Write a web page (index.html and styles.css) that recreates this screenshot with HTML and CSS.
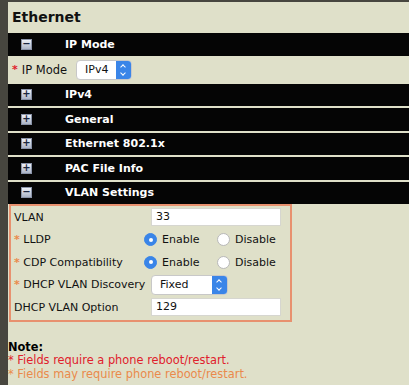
FILE: index.html
```html
<!DOCTYPE html>
<html lang="en">
<head>
  <meta charset="UTF-8">
  <title>Ethernet</title>
  <link rel="stylesheet" href="styles.css">
</head>
<body>
  <div class="page">
    <h1 class="title">Ethernet</h1>

    <div class="bar"><span class="toggle">&minus;</span><span class="bar-label">IP Mode</span></div>
    <div class="ipmode">
      <span class="req">*</span><span class="ip-label">IP Mode</span>
      <span class="select small"><span class="select-text">IPv4</span><span class="arrows"></span></span>
    </div>

    <div class="bar"><span class="toggle">+</span><span class="bar-label">IPv4</span></div>
    <div class="bar gap"><span class="toggle">+</span><span class="bar-label">General</span></div>
    <div class="bar gap"><span class="toggle">+</span><span class="bar-label">Ethernet 802.1x</span></div>
    <div class="bar gap"><span class="toggle">+</span><span class="bar-label">PAC File Info</span></div>
    <div class="bar gap"><span class="toggle">&minus;</span><span class="bar-label">VLAN Settings</span></div>

    <div class="vlan">
      <div class="row">
        <span class="label">VLAN</span>
        <span class="input">33</span>
      </div>
      <div class="row">
        <span class="label"><span class="may">*</span> LLDP</span>
        <span class="radios">
          <span class="radio on"></span><span class="opt">Enable</span>
          <span class="radio"></span><span class="opt">Disable</span>
        </span>
      </div>
      <div class="row">
        <span class="label"><span class="may">*</span> CDP Compatibility</span>
        <span class="radios">
          <span class="radio on"></span><span class="opt">Enable</span>
          <span class="radio"></span><span class="opt">Disable</span>
        </span>
      </div>
      <div class="row">
        <span class="label"><span class="may">*</span> DHCP VLAN Discovery</span>
        <span class="select wide"><span class="select-text">Fixed</span><span class="arrows"></span></span>
      </div>
      <div class="row">
        <span class="label">DHCP VLAN Option</span>
        <span class="input">129</span>
      </div>
    </div>

    <div class="note">
      <div class="note-title">Note:</div>
      <div class="note-red">* Fields require a phone reboot/restart.</div>
      <div class="note-orange">* Fields may require phone reboot/restart.</div>
    </div>
  </div>
</body>
</html>
```

FILE: styles.css
```css
body {
  margin: 0;
  padding: 0;
  background-color: #dfe0c9;
  font-family: "DejaVu Sans", Verdana, sans-serif;
  font-size: 11px;
  color: #111;
}

.page {
  border-left: 8px solid #47463f;
  border-top: 2px solid #47463f;
  min-height: 383px;
}

.title {
  margin: 0;
  height: 31px;
  line-height: 30px;
  padding-left: 4px;
  font-size: 14px;
  font-weight: bold;
}

.bar {
  display: flex;
  align-items: center;
  height: 22.5px;
  background-color: #050505;
  color: #fff;
}

.bar.gap {
  margin-top: 2px;
}

.toggle {
  width: 9px;
  height: 9px;
  margin-left: 13px;
  border: 1px solid #8a93a8;
  background: linear-gradient(#eef1f7, #aab3c6);
  color: #1c2740;
  font-size: 10px;
  font-weight: bold;
  line-height: 8px;
  text-align: center;
}

.bar-label {
  margin-left: 33px;
  font-size: 11px;
  font-weight: bold;
}

.ipmode {
  display: flex;
  align-items: center;
  height: 28px;
  padding-left: 4px;
}

.req {
  color: #e0202c;
  font-weight: bold;
  margin-right: 4px;
}

.ip-label {
  margin-right: 9px;
  font-size: 11.5px;
}

.select {
  display: flex;
  align-items: center;
  height: 18px;
  background-color: #fff;
  border: 1px solid #c8c8c8;
  border-radius: 4px;
  overflow: hidden;
}

.select.small {
  width: 54px;
}

.select.wide {
  width: 75px;
}

.select-text {
  flex: 1;
  padding-left: 8px;
}

.arrows {
  width: 15px;
  height: 100%;
  background-color: #3a85e8;
  position: relative;
}

.arrows::before,
.arrows::after {
  content: "";
  position: absolute;
  left: 5px;
  width: 3px;
  height: 3px;
  border-left: 1px solid #fff;
  border-top: 1px solid #fff;
}

.arrows::before {
  top: 4px;
  transform: rotate(45deg);
}

.arrows::after {
  bottom: 4px;
  transform: rotate(225deg);
}

.vlan {
  width: 279px;
  margin-left: 1px;
  border: 2px solid #e8916f;
  padding: 0 0 1px;
}

.row {
  display: flex;
  align-items: center;
  height: 22.5px;
}

.label {
  width: 137px;
  padding-left: 3px;
}

.may {
  color: #ea8a4c;
  font-weight: bold;
}

.input {
  width: 124px;
  height: 16px;
  line-height: 16px;
  padding-left: 4px;
  background-color: #fff;
  border: 1px solid #d6d6d0;
}

.radios {
  display: flex;
  align-items: center;
  margin-left: -2px;
}

.radio {
  width: 13px;
  height: 13px;
  border-radius: 50%;
  background-color: #fff;
  border: 1px solid #b8b8b8;
  box-sizing: border-box;
  margin-right: 5px;
  position: relative;
}

.radio.on {
  background-color: #3a85e8;
  border-color: #3a85e8;
}

.radio.on::after {
  content: "";
  position: absolute;
  left: 3.5px;
  top: 3.5px;
  width: 4px;
  height: 4px;
  border-radius: 50%;
  background-color: #fff;
}

.opt {
  width: 55px;
}

.note {
  padding-top: 19px;
  line-height: 13.5px;
  font-size: 11.4px;
}

.note-title {
  font-weight: bold;
  color: #000;
}

.note-red {
  color: #e0202c;
}

.note-orange {
  color: #ea8a4c;
}
```
